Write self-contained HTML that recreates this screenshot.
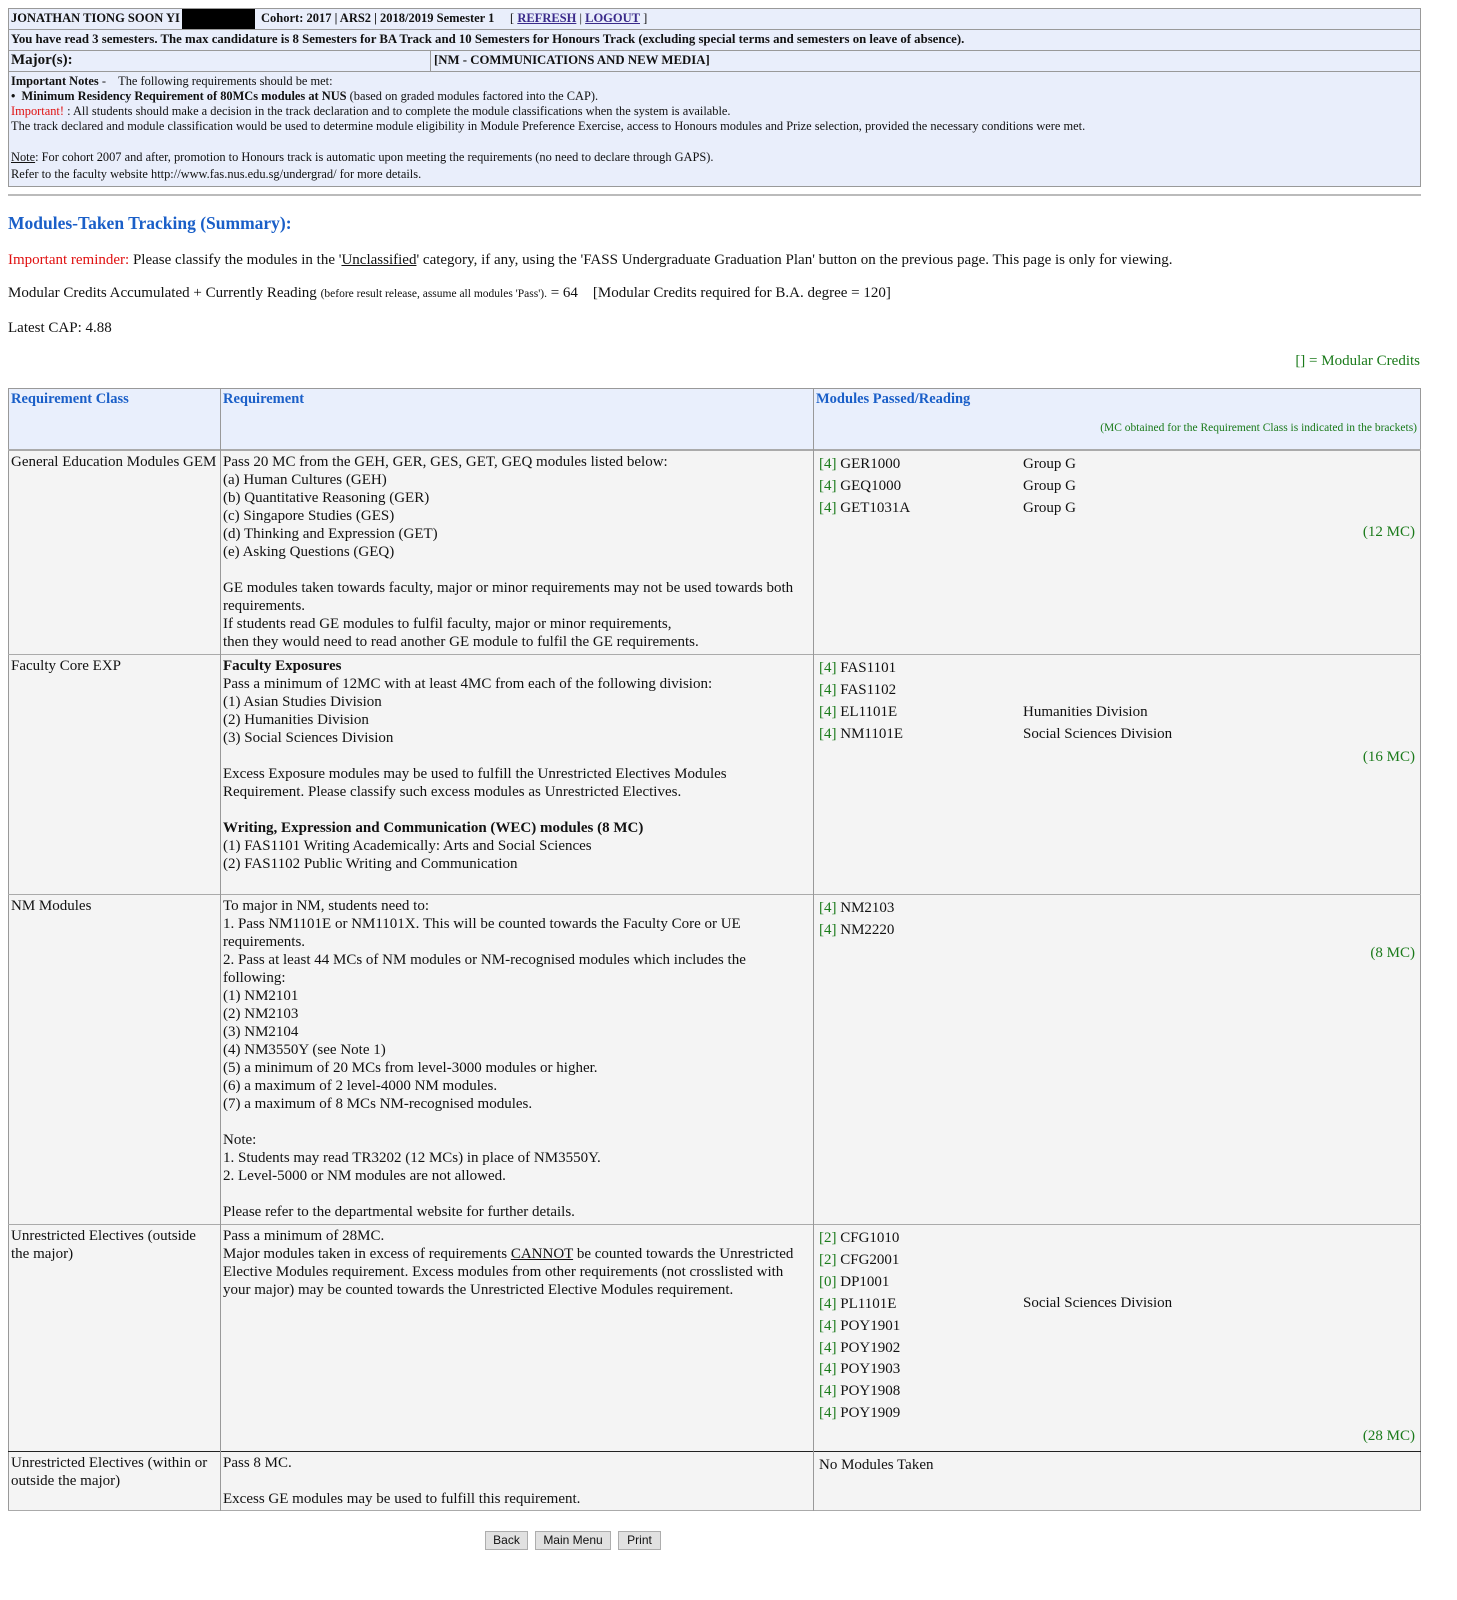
<!DOCTYPE html>
<html><head><meta charset="utf-8">
<style>
body{margin:0;background:#fff;font-family:"Liberation Serif",serif;color:#111;font-size:15px;}
.a{position:absolute;white-space:nowrap}
.box{position:absolute;box-sizing:border-box}
.g{color:#1a7a1a}
.b{color:#1a5fc8}
.r{color:#e01010}
.cell{position:absolute;box-sizing:border-box;background:#f4f4f4;border:1px solid #aaa}
.t{position:absolute;line-height:18px;white-space:pre;font-size:15px}
.m{position:absolute;line-height:21.9px;white-space:pre;font-size:15px}
.btn{position:absolute;top:1531px;height:19px;box-sizing:border-box;border:1px solid #adadad;background:#e1e1e1;font-family:"Liberation Sans",sans-serif;font-size:12px;text-align:center;line-height:17px;color:#111}
</style></head><body>
<!-- top box -->
<div class="box" style="left:8px;top:8px;width:1413px;height:179px;background:#e9eefb;border:1px solid #999"></div>
<div class="box" style="left:8px;top:29px;width:1413px;height:1px;background:#999"></div>
<div class="box" style="left:8px;top:50px;width:1413px;height:1px;background:#999"></div>
<div class="box" style="left:8px;top:71px;width:1413px;height:1px;background:#999"></div>
<div class="box" style="left:430px;top:50px;width:1px;height:21px;background:#999"></div>
<div class="a" style="left:11px;top:11px;font-size:12.5px;font-weight:bold">JONATHAN TIONG SOON YI</div>
<div class="box" style="left:182px;top:9px;width:73px;height:20px;background:#000"></div>
<div class="a" style="left:261px;top:11px;font-size:12.5px"><b>Cohort: 2017 | ARS2 | 2018/2019 Semester 1</b> &nbsp;&nbsp;&nbsp; [ <u style="color:#3a2a8a;font-weight:bold">REFRESH</u> | <u style="color:#3a2a8a;font-weight:bold">LOGOUT</u> ]</div>
<div class="a" style="left:11px;top:32px;font-size:12.8px;font-weight:bold">You have read 3 semesters. The max candidature is 8 Semesters for BA Track and 10 Semesters for Honours Track (excluding special terms and semesters on leave of absence).</div>
<div class="a" style="left:11px;top:52px;font-size:15px;font-weight:bold">Major(s):</div>
<div class="a" style="left:434px;top:53px;font-size:12.8px;font-weight:bold">[NM - COMMUNICATIONS AND NEW MEDIA]</div>
<div class="a" style="left:11px;top:74px;font-size:12.4px;line-height:15px;white-space:pre"><b>Important Notes</b> -    The following requirements should be met:
<b>•  Minimum Residency Requirement of 80MCs modules at NUS</b> (based on graded modules factored into the CAP).
<span class="r">Important!</span> : All students should make a decision in the track declaration and to complete the module classifications when the system is available.
The track declared and module classification would be used to determine module eligibility in Module Preference Exercise, access to Honours modules and Prize selection, provided the necessary conditions were met.</div>
<div class="a" style="left:11px;top:149px;font-size:12.4px;line-height:17px;white-space:pre"><u>Note</u>: For cohort 2007 and after, promotion to Honours track is automatic upon meeting the requirements (no need to declare through GAPS).
Refer to the faculty website http://www.fas.nus.edu.sg/undergrad/ for more details.</div>
<div class="box" style="left:8px;top:194px;width:1413px;height:2px;background:#bbb"></div>

<div class="a b" style="left:8px;top:213px;font-size:17.5px;font-weight:bold">Modules-Taken Tracking (Summary):</div>
<div class="a" style="left:8px;top:252px;font-size:15px"><span class="r">Important reminder:</span> Please classify the modules in the '<u>Unclassified</u>' category, if any, using the 'FASS Undergraduate Graduation Plan' button on the previous page. This page is only for viewing.</div>
<div class="a" style="left:8px;top:285px;font-size:15px">Modular Credits Accumulated + Currently Reading <span style="font-size:11.5px">(before result release, assume all modules 'Pass').</span> = 64 &nbsp;&nbsp; [Modular Credits required for B.A. degree = 120]</div>
<div class="a" style="left:8px;top:320px;font-size:15px">Latest CAP: 4.88</div>
<div class="a g" style="right:37px;top:353px;font-size:15px">[] = Modular Credits</div>

<!-- table -->
<div class="cell" style="left:8px;top:388px;width:1413px;height:1123px;border:1px solid #999"></div>
<div class="box" style="left:9px;top:389px;width:1411px;height:61px;background:#e9effc"></div>
<div class="box" style="left:8px;top:449px;width:1413px;height:2px;background:#aaa"></div>
<div class="box" style="left:8px;top:654px;width:1413px;height:1px;background:#aaa"></div>
<div class="box" style="left:8px;top:894px;width:1413px;height:1px;background:#aaa"></div>
<div class="box" style="left:8px;top:1224px;width:1413px;height:1px;background:#aaa"></div>
<div class="box" style="left:8px;top:1451px;width:1413px;height:1px;background:#222"></div>
<div class="box" style="left:8px;top:1510px;width:1413px;height:1px;background:#aaa"></div>
<div class="box" style="left:220px;top:388px;width:1px;height:1123px;background:#999"></div>
<div class="box" style="left:813px;top:388px;width:1px;height:1123px;background:#999"></div>

<div class="a b" style="left:11px;top:391px;font-size:14.5px;font-weight:bold">Requirement Class</div>
<div class="a b" style="left:223px;top:391px;font-size:14.5px;font-weight:bold">Requirement</div>
<div class="a b" style="left:816px;top:391px;font-size:14.5px;font-weight:bold">Modules Passed/Reading</div>
<div class="a g" style="right:40px;top:422px;font-size:11.5px">(MC obtained for the Requirement Class is indicated in the brackets)</div>

<!-- GEM -->
<div class="t" style="left:11px;top:453px">General Education Modules GEM</div>
<div class="t" style="left:223px;top:453px">Pass 20 MC from the GEH, GER, GES, GET, GEQ modules listed below:
(a) Human Cultures (GEH)
(b) Quantitative Reasoning (GER)
(c) Singapore Studies (GES)
(d) Thinking and Expression (GET)
(e) Asking Questions (GEQ)

GE modules taken towards faculty, major or minor requirements may not be used towards both
requirements.
If students read GE modules to fulfil faculty, major or minor requirements,
then they would need to read another GE module to fulfil the GE requirements.</div>
<div class="m" style="left:819px;top:454px"><span class="g">[4]</span> GER1000
<span class="g">[4]</span> GEQ1000
<span class="g">[4]</span> GET1031A</div>
<div class="m" style="left:1023px;top:454px">Group G
Group G
Group G</div>
<div class="a g" style="right:42px;top:524px;font-size:15px">(12 MC)</div>

<!-- Faculty -->
<div class="t" style="left:11px;top:657px">Faculty Core EXP</div>
<div class="t" style="left:223px;top:657px"><b>Faculty Exposures</b>
Pass a minimum of 12MC with at least 4MC from each of the following division:
(1) Asian Studies Division
(2) Humanities Division
(3) Social Sciences Division

Excess Exposure modules may be used to fulfill the Unrestricted Electives Modules
Requirement. Please classify such excess modules as Unrestricted Electives.

<b>Writing, Expression and Communication (WEC) modules (8 MC)</b>
(1) FAS1101 Writing Academically: Arts and Social Sciences
(2) FAS1102 Public Writing and Communication</div>
<div class="m" style="left:819px;top:658px"><span class="g">[4]</span> FAS1101
<span class="g">[4]</span> FAS1102
<span class="g">[4]</span> EL1101E
<span class="g">[4]</span> NM1101E</div>
<div class="m" style="left:1023px;top:658px">

Humanities Division
Social Sciences Division</div>
<div class="a g" style="right:42px;top:749px;font-size:15px">(16 MC)</div>

<!-- NM -->
<div class="t" style="left:11px;top:897px">NM Modules</div>
<div class="t" style="left:223px;top:897px">To major in NM, students need to:
1. Pass NM1101E or NM1101X. This will be counted towards the Faculty Core or UE
requirements.
2. Pass at least 44 MCs of NM modules or NM-recognised modules which includes the
following:
(1) NM2101
(2) NM2103
(3) NM2104
(4) NM3550Y (see Note 1)
(5) a minimum of 20 MCs from level-3000 modules or higher.
(6) a maximum of 2 level-4000 NM modules.
(7) a maximum of 8 MCs NM-recognised modules.

Note:
1. Students may read TR3202 (12 MCs) in place of NM3550Y.
2. Level-5000 or NM modules are not allowed.

Please refer to the departmental website for further details.</div>
<div class="m" style="left:819px;top:898px"><span class="g">[4]</span> NM2103
<span class="g">[4]</span> NM2220</div>
<div class="a g" style="right:42px;top:945px;font-size:15px">(8 MC)</div>

<!-- UE -->
<div class="t" style="left:11px;top:1227px">Unrestricted Electives (outside
the major)</div>
<div class="t" style="left:223px;top:1227px">Pass a minimum of 28MC.
Major modules taken in excess of requirements <u>CANNOT</u> be counted towards the Unrestricted
Elective Modules requirement. Excess modules from other requirements (not crosslisted with
your major) may be counted towards the Unrestricted Elective Modules requirement.</div>
<div class="m" style="left:819px;top:1228px"><span class="g">[2]</span> CFG1010
<span class="g">[2]</span> CFG2001
<span class="g">[0]</span> DP1001
<span class="g">[4]</span> PL1101E
<span class="g">[4]</span> POY1901
<span class="g">[4]</span> POY1902
<span class="g">[4]</span> POY1903
<span class="g">[4]</span> POY1908
<span class="g">[4]</span> POY1909</div>
<div class="a" style="left:1023px;top:1295px;font-size:15px">Social Sciences Division</div>
<div class="a g" style="right:42px;top:1428px;font-size:15px">(28 MC)</div>

<!-- UE2 -->
<div class="t" style="left:11px;top:1454px">Unrestricted Electives (within or
outside the major)</div>
<div class="t" style="left:223px;top:1454px">Pass 8 MC.

Excess GE modules may be used to fulfill this requirement.</div>
<div class="a" style="left:819px;top:1457px;font-size:15px">No Modules Taken</div>

<div class="btn" style="left:485px;width:43px">Back</div>
<div class="btn" style="left:535px;width:76px">Main Menu</div>
<div class="btn" style="left:618px;width:43px">Print</div>
</body></html>
